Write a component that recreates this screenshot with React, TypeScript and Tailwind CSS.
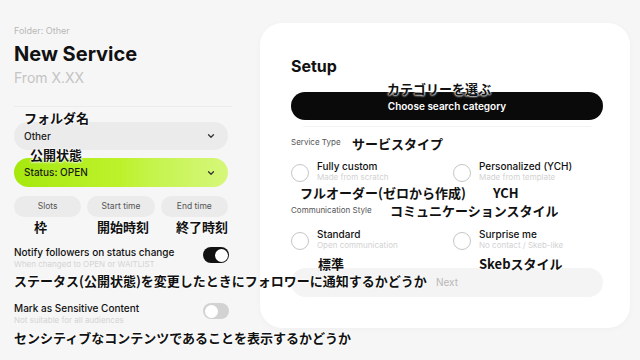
import React from 'react';
import { ChevronDown } from 'lucide-react';

const ui = "font-['Inter','Noto_Sans',sans-serif]";
const jp = "font-['Noto_Sans_CJK_JP','Noto_Sans',sans-serif]";

// Japanese labels painted over the screenshot, white halo around each
function Note({ x, y, children }: { x: number; y: number; children: React.ReactNode }) {
    return (
        <div
            className={`${jp} absolute whitespace-nowrap text-[13px] leading-none font-bold text-[#111] [text-shadow:0_0_2px_#fff,0_0_2px_#fff,0_0_3px_#fff]`}
            style={{ left: x, top: y }}
        >
            {children}
        </div>
    );
}

function Toggle({ on }: { on: boolean }) {
    return (
        <div className={`flex h-[16px] w-[26px] items-center rounded-full px-[1.5px] ${on ? 'bg-[#111] justify-end' : 'bg-[#d2d2d2] justify-start'}`}>
            <div className="h-[13px] w-[13px] rounded-full bg-white" />
        </div>
    );
}

function Radio({ title, sub }: { title: string; sub: string }) {
    return (
        <div className="flex w-[162px] items-start gap-[8px]">
            <div className="mt-[4px] h-[18px] w-[18px] rounded-full border-[1.5px] border-[#c6c6c6]" />
            <div>
                <div className="text-[10px] leading-[12px] font-medium text-[#111]">{title}</div>
                <div className="text-[8px] leading-[10px] text-[#d2d2d2]">{sub}</div>
            </div>
        </div>
    );
}

function SettingRow({ title, sub, on }: { title: string; sub: string; on: boolean }) {
    return (
        <div className="flex w-[215px] items-start justify-between">
            <div>
                <div className="text-[10px] leading-[12px] font-medium text-[#111]">{title}</div>
                <div className="mt-[1px] text-[8px] leading-[10px] text-[#d4d4d4]">{sub}</div>
            </div>
            <div className="mt-[1px]">
                <Toggle on={on} />
            </div>
        </div>
    );
}

export default function App() {
    return (
        <div className={`${ui} relative flex h-[360px] w-[640px] overflow-hidden bg-[#f6f6f6]`}>
            {/* Left column */}
            <div className="ml-[14px] flex w-[218px] flex-col pt-[26px]">
                <div className="text-[9px] leading-[10px] text-[#b8b8b8]">Folder: Other</div>
                <div className="mt-[6px] text-[20px] leading-[24px] font-bold text-[#111]">New Service</div>
                <div className="mt-[3px] text-[14px] leading-[18px] text-[#c4c4c4]">From X.XX</div>
                <div className="mt-[19px] h-px w-full bg-[#ececec]" />

                <div className="mt-[15px] flex h-[28px] w-[214px] items-center justify-between rounded-full bg-[#ebebeb] pl-[10px] pr-[12px]">
                    <span className="text-[10px] font-medium text-[#222]">Other</span>
                    <ChevronDown size={10} strokeWidth={3} className="text-[#333]" />
                </div>
                <div className="mt-[8px] flex h-[29px] w-[214px] items-center justify-between rounded-full bg-gradient-to-r from-[#a6e80c] via-[#bdf22a] to-[#d6f77a] pl-[10px] pr-[12px]">
                    <span className="text-[10px] font-medium text-[#1a1a1a]">Status: OPEN</span>
                    <ChevronDown size={10} strokeWidth={3} className="text-[#333]" />
                </div>

                <div className="mt-[9px] flex w-[214px] gap-[6px]">
                    {['Slots', 'Start time', 'End time'].map((t) => (
                        <div key={t} className="flex h-[21px] flex-1 items-center justify-center rounded-full bg-[#ebebeb] text-[8.5px] text-[#555]">
                            {t}
                        </div>
                    ))}
                </div>

                <div className="mt-[29px]">
                    <SettingRow title="Notify followers on status change" sub="When changed to OPEN or WAITLIST" on={true} />
                </div>
                <div className="mt-[33px]">
                    <SettingRow title="Mark as Sensitive Content" sub="Not suitable for all audiences" on={false} />
                </div>
            </div>

            {/* Setup card */}
            <div className="ml-[28px] mt-[23px] h-[305px] w-[370px] rounded-[22px] bg-white pl-[31px] pt-[33px] shadow-[0_1px_6px_rgba(0,0,0,0.03)]">
                <div className="text-[16px] leading-[20px] font-bold text-[#111]">Setup</div>
                <div className="mt-[16px] flex h-[28px] w-[312px] items-center justify-center rounded-full bg-[#0a0a0a] text-[10px] font-semibold text-white">
                    Choose search category
                </div>
                <div className="mx-[12px] mt-[6px] h-px w-[288px] bg-[#f2f2f2]" />

                <div className="mt-[10px] text-[8px] leading-[10px] text-[#555]">Service Type</div>
                <div className="mt-[13px] flex">
                    <Radio title="Fully custom" sub="Made from scratch" />
                    <Radio title="Personalized (YCH)" sub="Made from template" />
                </div>

                <div className="mt-[23px] text-[8px] leading-[10px] text-[#555]">Communication Style</div>
                <div className="mt-[13px] flex">
                    <Radio title="Standard" sub="Open communication" />
                    <Radio title="Surprise me" sub="No contact / Skeb-like" />
                </div>

                <div className="mt-[18px] flex h-[29px] w-[312px] items-center justify-center rounded-full bg-[#f4f4f4] text-[10px] text-[#b8b8b8]">
                    Next
                </div>
            </div>

            {/* Annotations */}
            <Note x={24} y={111}>フォルダ名</Note>
            <Note x={30} y={148}>公開状態</Note>
            <Note x={34} y={220}>枠</Note>
            <Note x={97} y={220}>開始時刻</Note>
            <Note x={176} y={220}>終了時刻</Note>
            <Note x={14} y={274}>ステータス(公開状態)を変更したときにフォロワーに通知するかどうか</Note>
            <Note x={14} y={331}>センシティブなコンテンツであることを表示するかどうか</Note>
            <Note x={387} y={82}>カテゴリーを選ぶ</Note>
            <Note x={352} y={137}>サービスタイプ</Note>
            <Note x={300} y={186}>フルオーダー(ゼロから作成)</Note>
            <Note x={493} y={186}>YCH</Note>
            <Note x={390} y={204}>コミュニケーションスタイル</Note>
            <Note x={318} y={257}>標準</Note>
            <Note x={479} y={257}>Skebスタイル</Note>
        </div>
    );
}
